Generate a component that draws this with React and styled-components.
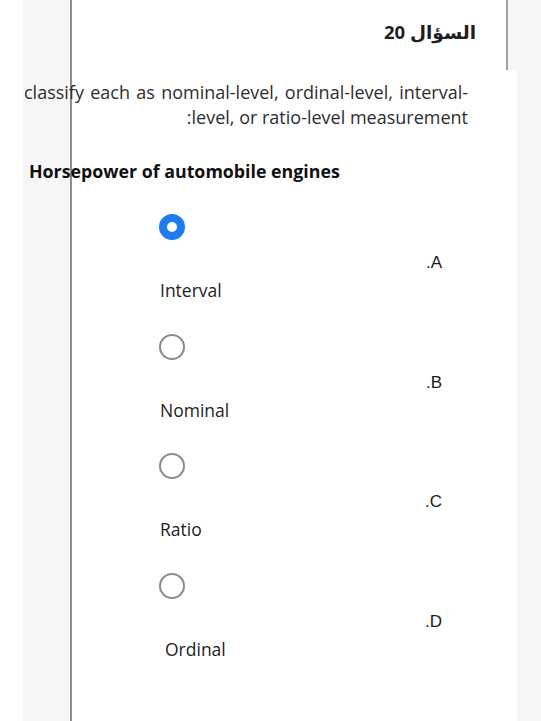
import React from "react";
import styled, { createGlobalStyle } from "styled-components";

const GlobalStyle = createGlobalStyle`
  html, body {
    margin: 0;
    padding: 0;
    background: #ffffff;
  }
  body {
    font-family: "Open Sans", "Noto Sans", "DejaVu Sans", sans-serif;
    color: #2b2b2b;
  }
`;

const railBg = `linear-gradient(
  90deg,
  #f6f6f6 0 47px,
  #8e8e8e 47px 49px,
  #ffffff 49px
)`;

const Page = styled.div`
  display: flex;
  width: 541px;
  min-height: 721px;
  padding-left: 23px;
  box-sizing: border-box;
  background: #ffffff;
`;

const Sheet = styled.div`
  flex: 1;
  display: flex;
  flex-direction: column;
  background: #f6f6f6;
`;

const Header = styled.div`
  height: 70px;
  width: 485px;
  box-sizing: border-box;
  display: flex;
  align-items: center;
  justify-content: flex-end;
  padding: 0 30px 8px 0;
  background: ${railBg};
  border-right: 2px solid #a3a3a3;
`;

const Title = styled.h2`
  margin: 0;
  direction: rtl;
  font-family: "Open Sans", "DejaVu Sans", sans-serif;
  font-size: 18.5px;
  font-weight: 700;
  color: #1e1e1e;
`;

const Card = styled.div`
  flex: 1;
  width: 494px;
  box-sizing: border-box;
  padding: 10px 49px 40px 1px;
  background: ${railBg};
`;

const Prompt = styled.p`
  margin: 0;
  direction: rtl;
  text-align: justify;
  text-align-last: right;
  font-size: 18px;
  line-height: 25px;
  color: #2e2e2e;
`;

const Subject = styled.h3`
  margin: 29px 0 0 5px;
  font-size: 17.8px;
  line-height: 24px;
  font-weight: 700;
  color: #111111;
`;

const OptionList = styled.div`
  display: flex;
  flex-direction: column;
  gap: 29.5px;
  margin: 31px 0 0 134px;
  width: 284px;
`;

const Option = styled.label`
  display: flex;
  flex-direction: column;
`;

const Radio = styled.span`
  width: 26px;
  height: 26px;
  box-sizing: border-box;
  border-radius: 50%;
  margin-left: 1px;
  border: ${(p) => (p.$checked ? "8px solid #1c7cf0" : "2px solid #8a8a8a")};
  background: #ffffff;
`;

const Letter = styled.span`
  direction: rtl;
  text-align: right;
  margin-top: 10px;
  font-family: "Liberation Sans", Arial, sans-serif;
  font-size: 17px;
  line-height: 26px;
  color: #1b1b1b;
`;

const Label = styled.span`
  font-size: 17.5px;
  line-height: 28px;
  color: #222222;
  padding-left: ${(p) => p.$indent}px;
`;

const options = [
  { letter: "A.", text: "Interval", checked: true, indent: 2 },
  { letter: "B.", text: "Nominal", indent: 2 },
  { letter: "C.", text: "Ratio", indent: 2 },
  { letter: "D.", text: "Ordinal", indent: 7 },
];

export default function App() {
  return (
    <>
      <GlobalStyle />
      <Page>
        <Sheet>
          <Header>
            <Title>السؤال 20</Title>
          </Header>
          <Card>
            <Prompt>
              classify each as nominal-level, ordinal-level, interval-level, or
              ratio-level measurement:
            </Prompt>
            <Subject>Horsepower of automobile engines</Subject>
            <OptionList>
              {options.map((o) => (
                <Option key={o.letter}>
                  <Radio $checked={o.checked} />
                  <Letter>{o.letter}</Letter>
                  <Label $indent={o.indent}>{o.text}</Label>
                </Option>
              ))}
            </OptionList>
          </Card>
        </Sheet>
      </Page>
    </>
  );
}
